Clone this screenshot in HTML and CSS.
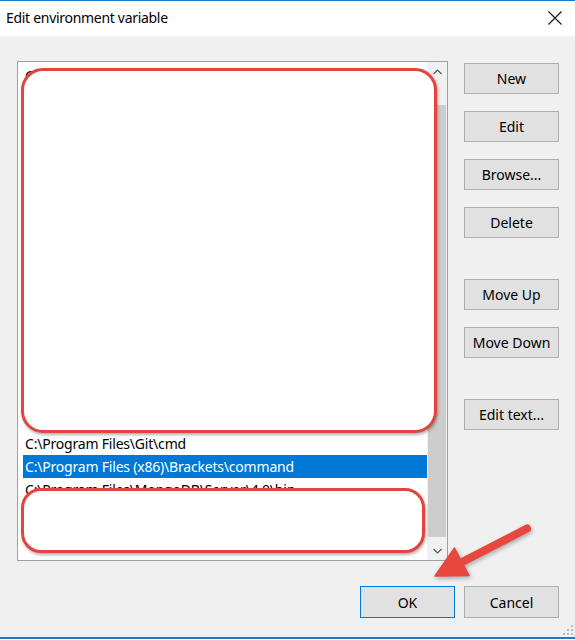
FILE: index.html
```html
<!DOCTYPE html>
<html>
<head>
<meta charset="utf-8">
<link rel="stylesheet" href="styles.css">
</head>
<body>
<div class="window">
  <div class="titlebar">
    <span class="title">Edit environment variable</span>
    <svg class="close" width="14" height="14" viewBox="0 0 14 14"><path d="M0.5 0.5 L13.5 13.5 M13.5 0.5 L0.5 13.5" stroke="#111" stroke-width="1.1" fill="none"/></svg>
  </div>
  <div class="content">
    <div class="listbox">
      <div class="items">
        <div class="row">C:\Program Files (x86)\Common Files\Oracle\Java\javapath</div>
        <div class="row">%SystemRoot%\system32</div>
        <div class="row">%SystemRoot%</div>
        <div class="row">%SystemRoot%\System32\Wbem</div>
        <div class="row">%SYSTEMROOT%\System32\WindowsPowerShell\v1.0\</div>
        <div class="row">C:\Program Files\nodejs\</div>
        <div class="row">C:\Program Files\Java\jdk1.8.0_181\bin</div>
        <div class="row">C:\Python27</div>
        <div class="row">C:\Python27\Scripts</div>
        <div class="row">C:\Program Files\PuTTY\</div>
        <div class="row">C:\Program Files\dotnet\</div>
        <div class="row">C:\WINDOWS\System32\OpenSSH\</div>
        <div class="row">C:\Program Files\Microsoft SQL Server\130\Tools\Binn\</div>
        <div class="row">C:\Program Files\Intel\WiFi\bin\</div>
        <div class="row">C:\Program Files\Common Files\Intel\WirelessCommon\</div>
        <div class="row">C:\xampp\php</div>
        <div class="row">C:\Program Files\Git\cmd</div>
        <div class="row selected">C:\Program Files (x86)\Brackets\command</div>
        <div class="row">C:\Program Files\MongoDB\Server\4.0\bin</div>
        <div class="row">C:\ProgramData\ComposerSetup\bin</div>
        <div class="row">C:\Program Files\Heroku\bin</div>
      </div>
      <div class="scrollbar">
        <div class="arrow">
          <svg width="9" height="6" viewBox="0 0 9 6"><path d="M0.5 5 L4.5 1 L8.5 5" stroke="#555" stroke-width="1.2" fill="none"/></svg>
        </div>
        <div class="track"><div class="thumb"></div></div>
        <div class="arrow">
          <svg width="9" height="6" viewBox="0 0 9 6"><path d="M0.5 1 L4.5 5 L8.5 1" stroke="#555" stroke-width="1.2" fill="none"/></svg>
        </div>
      </div>
      <div class="mask mask-top"></div>
      <div class="mask mask-bottom"></div>
    </div>
    <div class="side">
      <div class="group">
        <button class="btn">New</button>
        <button class="btn">Edit</button>
        <button class="btn">Browse...</button>
        <button class="btn">Delete</button>
      </div>
      <div class="group">
        <button class="btn">Move Up</button>
        <button class="btn">Move Down</button>
      </div>
      <div class="group">
        <button class="btn">Edit text...</button>
      </div>
    </div>
  </div>
  <div class="footer">
    <button class="btn default">OK</button>
    <button class="btn">Cancel</button>
  </div>
  <svg class="grip" width="12" height="12" viewBox="0 0 12 12">
    <rect x="9" y="1" width="2" height="2" fill="#bdbdbd"/>
    <rect x="5" y="5" width="2" height="2" fill="#bdbdbd"/>
    <rect x="9" y="5" width="2" height="2" fill="#bdbdbd"/>
    <rect x="1" y="9" width="2" height="2" fill="#bdbdbd"/>
    <rect x="5" y="9" width="2" height="2" fill="#bdbdbd"/>
    <rect x="9" y="9" width="2" height="2" fill="#bdbdbd"/>
  </svg>
  <svg class="pointer" width="575" height="640" viewBox="0 0 575 640">
    <path d="M527 528.5 L462 562" stroke="#e8473f" stroke-width="8" stroke-linecap="round" fill="none"/>
    <path d="M435 576 L454.5 548 L469 575.5 Z" fill="#e8473f" stroke="#e8473f" stroke-width="1.5" stroke-linejoin="round"/>
  </svg>
</div>
</body>
</html>
```
FILE: styles.css
```css
* { box-sizing: border-box; }
html, body { margin: 0; padding: 0; background: #ffffff; }
body {
  width: 575px;
  height: 640px;
  font-family: "Noto Sans", "Open Sans", sans-serif;
  color: #000;
}
.window {
  position: relative;
  width: 575px;
  height: 639px;
  background: #f0f0f0;
  border-top: 1px solid #1979ca;
  border-bottom: 2px solid #1979ca;
  display: flex;
  flex-direction: column;
  overflow: hidden;
}
.titlebar {
  height: 35px;
  background: #ffffff;
  display: flex;
  align-items: center;
  justify-content: space-between;
  padding: 0 13px 2px 6px;
  flex-shrink: 0;
}
.title {
  font-size: 14px;
  letter-spacing: -0.3px;
  color: #000;
}
.close { display: block; }
.content {
  display: flex;
  padding: 25px 0 0 17px;
}
.listbox {
  position: relative;
  width: 431px;
  height: 500px;
  background: #fff;
  border: 1px solid #a0a0a0;
  display: flex;
  overflow: hidden;
}
.items {
  width: 409px;
  padding: 2px 0 0 5px;
  overflow: hidden;
}
.row {
  height: 23px;
  line-height: 23px;
  font-size: 14px;
  letter-spacing: -0.2px;
  padding-left: 2px;
  white-space: nowrap;
  overflow: hidden;
}
.row.selected {
  background: #0078d7;
  color: #fff;
}
.scrollbar {
  width: 20px;
  background: #f0f0f0;
  display: flex;
  flex-direction: column;
}
.arrow {
  height: 19px;
  display: flex;
  align-items: center;
  justify-content: center;
}
.arrow svg { display: block; }
.track {
  flex: 1;
  padding: 24px 1px 1px 1px;
}
.thumb {
  height: 432px;
  background: #cdcdcd;
}
.mask {
  position: absolute;
  background: #fff;
  border: 3px solid #e5433d;
  box-shadow: 1px 2px 3px rgba(0,0,0,0.3);
}
.mask-top {
  left: 3px;
  top: 6px;
  width: 416px;
  height: 365px;
  border-radius: 22px;
}
.mask-bottom {
  left: 3px;
  top: 426px;
  width: 404px;
  height: 65px;
  border-radius: 20px;
}
.side {
  margin-left: 16px;
  padding-top: 2px;
  display: flex;
  flex-direction: column;
  gap: 41px;
}
.group {
  display: flex;
  flex-direction: column;
  gap: 17px;
}
.btn {
  width: 95px;
  height: 31px;
  background: #e1e1e1;
  border: 1px solid #adadad;
  font-family: "Noto Sans", "Open Sans", sans-serif;
  font-size: 14px;
  color: #000;
  padding: 0;
  margin: 0;
}
.btn.default {
  border-color: #0078d7;
}
.footer {
  display: flex;
  justify-content: flex-end;
  gap: 9px;
  padding: 25px 16px 0 0;
}
.footer .btn { height: 32px; }
.grip {
  position: absolute;
  right: 1px;
  bottom: 1px;
}
.pointer {
  position: absolute;
  left: 0;
  top: -1px;
  filter: drop-shadow(1px 2px 2px rgba(0,0,0,0.3));
  pointer-events: none;
}
```
